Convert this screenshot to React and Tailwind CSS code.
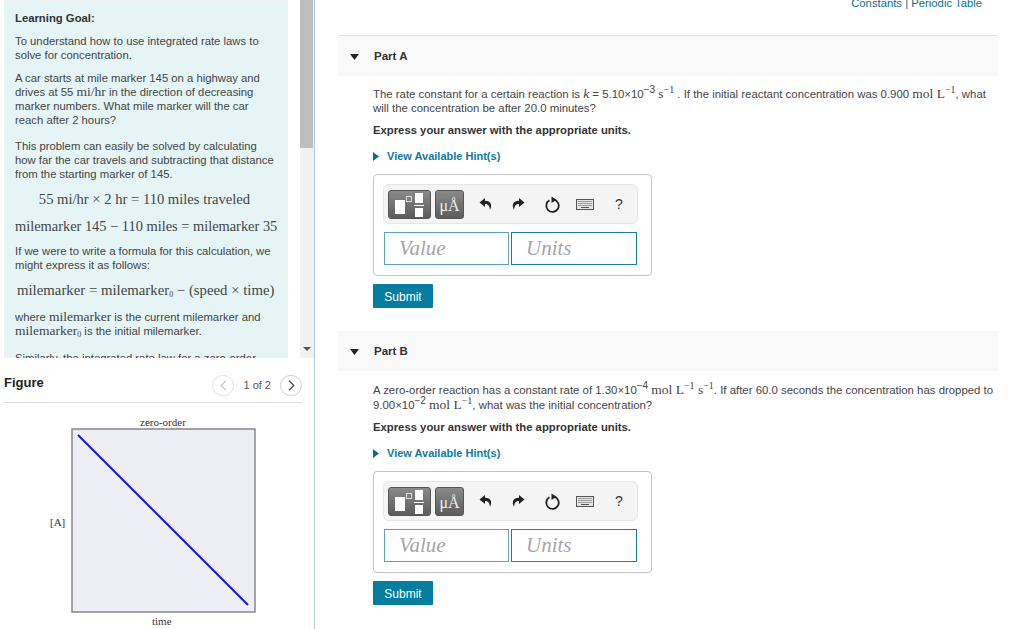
const sans = 'font-["Liberation_Sans",Arial,sans-serif]'

function M({ children, className = '' }) {
  return <span className={`font-["Liberation_Serif",serif] text-[13.500px] leading-none ${className}`}>{children}</span>
}

function Sup({ children }) {
  return <sup className="text-[10px] leading-none top-[-5px]">{children}</sup>
}

function Triangle() {
  return (
    <svg width="9" height="6" viewBox="0 0 9 6"><path d="M0 0h9L4.500 6z" fill="#222" /></svg>
  )
}

function EditorIcons() {
  return (
    <div className="flex items-center h-[40px] w-[255px] bg-[#f4f4f4] border border-[#e6e6e6] rounded-[6px] pl-[4px]">
      <button className="w-[43px] h-[29px] rounded-[3px] border border-[#555] bg-gradient-to-b from-[#8a8a8a] to-[#5c5c5c] relative">
        <span className="absolute left-[6px] top-[9px] w-[10px] h-[14px] bg-white" />
        <span className="absolute left-[17px] top-[5px] w-[6px] h-[6px] border border-[#ddd]" />
        <span className="absolute left-[26px] top-[2px] w-[8px] h-[10px] bg-white" />
        <span className="absolute left-[25px] top-[14px] w-[10px] h-[1px] bg-white" />
        <span className="absolute left-[26px] top-[17px] w-[8px] h-[9px] bg-white" />
      </button>
      <button className="ml-[4px] w-[29px] h-[29px] rounded-[3px] border border-[#555] bg-gradient-to-b from-[#8a8a8a] to-[#5c5c5c] text-[#eee] text-[16px] font-['Liberation_Serif',serif] leading-none pt-[4px]">
        μÅ
      </button>
      <svg className="ml-[15px]" width="14" height="14" viewBox="0 0 14 14">
        <path d="M6 1 L0.500 5.500 L6 10 V7 C9 7 10.500 8.500 11 13 C13.500 8 12 3.800 6 3.800z" fill="#222" />
      </svg>
      <svg className="ml-[18px]" width="14" height="14" viewBox="0 0 14 14">
        <path d="M8 1 L13.500 5.500 L8 10 V7 C5 7 3.500 8.500 3 13 C0.500 8 2 3.800 8 3.800z" fill="#222" />
      </svg>
      <svg className="ml-[20px]" width="16" height="17" viewBox="0 0 16 17" fill="none">
        <path d="M9 3.700 A6.200 6.200 0 1 1 4.500 4.300" stroke="#222" strokeWidth="1.800" />
        <path d="M6.500 .5 L11.500 3.700 L6.500 7z" fill="#222" />
      </svg>
      <svg className="ml-[15px]" width="18" height="11" viewBox="0 0 18 11">
        <rect x="0.500" y="0.500" width="17" height="10" fill="#e4e4e4" stroke="#555" />
        <path d="M2.500 2.500h13M2.500 4.500h13M2.500 6.500h13" stroke="#555" strokeDasharray="1 1" />
        <path d="M5 8.500h8" stroke="#555" />
      </svg>
      <span className="ml-[21px] text-[14px] text-[#333]">?</span>
    </div>
  )
}

function AnswerBox() {
  return (
    <div className="w-[279px] h-[102px] border border-[#c4c4c4] rounded-[4px] pt-[9px] pl-[9px]">
      <EditorIcons />
      <div className="flex gap-[2px] mt-[8px] ml-[1px]">
        <div className="w-[125px] h-[33px] border border-[#5ba3b8] pl-[14px] font-['Liberation_Serif',serif] italic text-[21px] leading-[30px] text-[#a5a5a5]">Value</div>
        <div className="w-[126px] h-[33px] border border-[#1a7f9c] pl-[14px] font-['Liberation_Serif',serif] italic text-[21px] leading-[30px] text-[#a5a5a5]">Units</div>
      </div>
    </div>
  )
}

function Part({ title, children, top, body }) {
  return (
    <section className={top}>
      <div className="h-[40px] flex items-center bg-[#f9f9f9] pl-[12px] pt-[2px]">
        <Triangle />
        <span className="ml-[15px] text-[11.500px] font-bold text-[#333]">{title}</span>
      </div>
      <div className="pl-[35px]">
        <div className={`text-[11.400px] text-[#444] w-[640px] whitespace-nowrap ${body}`}>{children}</div>
        <p className="mt-[7px] text-[11.300px] leading-[14px] font-bold text-[#333]">Express your answer with the appropriate units.</p>
        <div className="mt-[12px] flex items-center text-[11px] leading-[14px] font-bold text-[#0b7c9c]">
          <svg width="6" height="9" viewBox="0 0 6 9"><path d="M0 0l6 4.500L0 9z" fill="#0b6e8c" /></svg>
          <span className="ml-[8px]">View Available Hint(s)</span>
        </div>
        <div className="mt-[11px]"><AnswerBox /></div>
        <button className="block mt-[8px] w-[60px] h-[24px] bg-[#037da0] rounded-[1px] text-white text-[12px] pt-[1px]">Submit</button>
      </div>
    </section>
  )
}

export default function App() {
  return (
    <div className={`w-[1024px] h-[629px] overflow-hidden flex bg-white ${sans}`}>
      <aside className="w-[315px] h-[629px] shrink-0 border-r border-[#b4c8e4]">
        <div className="h-[358px] flex">
          <div className="ml-[4px] w-[284px] h-[358px] overflow-hidden bg-[#e5f5f6] border-t border-[#f0f0f0] pl-[11px] text-[11.300px] leading-[14px] text-[#444] whitespace-nowrap">
            <h2 className="mt-[10px] font-bold text-[#333]">Learning Goal:</h2>
            <p className="mt-[9px]">To understand how to use integrated rate laws to<br />solve for concentration.</p>
            <p className="mt-[9px]">A car starts at mile marker 145 on a highway and<br />drives at 55 <M>mi/hr</M> in the direction of decreasing<br />marker numbers. What mile marker will the car<br />reach after 2 hours?</p>
            <p className="mt-[12px]">This problem can easily be solved by calculating<br />how far the car travels and subtracting that distance<br />from the starting marker of 145.</p>
            <p className="mt-[11px] w-[259px] text-center"><M className="text-[14.600px]">55 mi/hr × 2 hr = 110 miles traveled</M></p>
            <p className="mt-[12px]"><M className="text-[14.400px]">milemarker 145 − 110 miles = milemarker 35</M></p>
            <p className="mt-[10px]">If we were to write a formula for this calculation, we<br />might express it as follows:</p>
            <p className="mt-[11px] pl-[2px]"><M className="text-[14.800px]">milemarker = milemarker<sub className="text-[8px]">0</sub> − (speed × time)</M></p>
            <p className="mt-[12px]">where <M>milemarker</M> is the current milemarker and<br /><M>milemarker<sub className="text-[8px]">0</sub></M> is the initial milemarker.</p>
            <p className="mt-[13px]">Similarly, the integrated rate law for a zero-order</p>
          </div>
          <div className="ml-[12px] w-[14px] h-[358px] bg-[#f1f1f1] relative">
            <div className="h-[148px] bg-[#bdbdbd] w-[13px]" />
            <svg className="absolute left-[3px] top-[347px]" width="8" height="4" viewBox="0 0 8 4"><path d="M0 0h8L4 4z" fill="#555" /></svg>
          </div>
        </div>
        <div className="mx-[4px] w-[298px] h-[45px] flex items-center justify-between border-b border-[#dcdcdc] pt-[6px]">
          <h3 className="text-[13px] font-bold text-[#222]">Figure</h3>
          <div className="flex items-center text-[11px] text-[#555] mt-[5px]">
            <span className="w-[22px] h-[21px] rounded-full border border-[#e0e0e0] flex items-center justify-center">
              <svg width="7" height="11" viewBox="0 0 7 11" fill="none"><path d="M6 .8L1.200 5.500 6 10.200" stroke="#c8c8c8" strokeWidth="1.200" /></svg>
            </span>
            <span className="mx-[9px]">1 of 2</span>
            <span className="w-[22px] h-[21px] rounded-full border border-[#cfcfcf] flex items-center justify-center">
              <svg width="7" height="11" viewBox="0 0 7 11" fill="none"><path d="M1 .8L5.800 5.500 1 10.200" stroke="#444" strokeWidth="1.200" /></svg>
            </span>
          </div>
        </div>
        <div className="relative font-['Liberation_Serif',serif] text-[11px] text-[#333]">
          <span className="absolute left-[140px] top-[11px]">zero-order</span>
          <span className="absolute left-[50px] top-[111px]">[A]</span>
          <svg className="absolute left-[71px] top-[25px]" width="185" height="185" viewBox="0 0 185 185">
            <rect x="1" y="1" width="183" height="183" fill="#eeeff6" stroke="#888" strokeWidth="1.500" />
            <path d="M7 7L177 177" stroke="#1a10e8" strokeWidth="2" />
          </svg>
          <span className="absolute left-[152px] top-[210px]">time</span>
        </div>
      </aside>
      <main className="flex-1 relative text-[11px]">
        <div className="h-[34px] -mt-[4px] pr-[42px] text-right text-[11.300px] leading-[14px] text-[#0b6e8c]">Constants | Periodic Table</div>
        <div className="ml-[23px] w-[660px]">
          <Part title="Part A" top="border-t border-[#e2e2e2] mt-[5px]" body="mt-[11px] h-[29px] leading-[14px]">
            The rate constant for a certain reaction is <M className="italic">k</M> = 5.10×10<Sup>−3</Sup> <M>s<Sup>−1</Sup></M> . If the initial reactant concentration was 0.900 <M>mol L<Sup>−1</Sup></M>, what<br />will the concentration be after 20.0 minutes?
          </Part>
          <Part title="Part B" top="mt-[23px]" body="mt-[12px] h-[30px] leading-[15px]">
            A zero-order reaction has a constant rate of 1.30×10<Sup>−4</Sup> <M>mol L<Sup>−1</Sup> s<Sup>−1</Sup></M>. If after 60.0 seconds the concentration has dropped to<br />9.00×10<Sup>−2</Sup> <M>mol L<Sup>−1</Sup></M>, what was the initial concentration?
          </Part>
        </div>
      </main>
    </div>
  )
}
